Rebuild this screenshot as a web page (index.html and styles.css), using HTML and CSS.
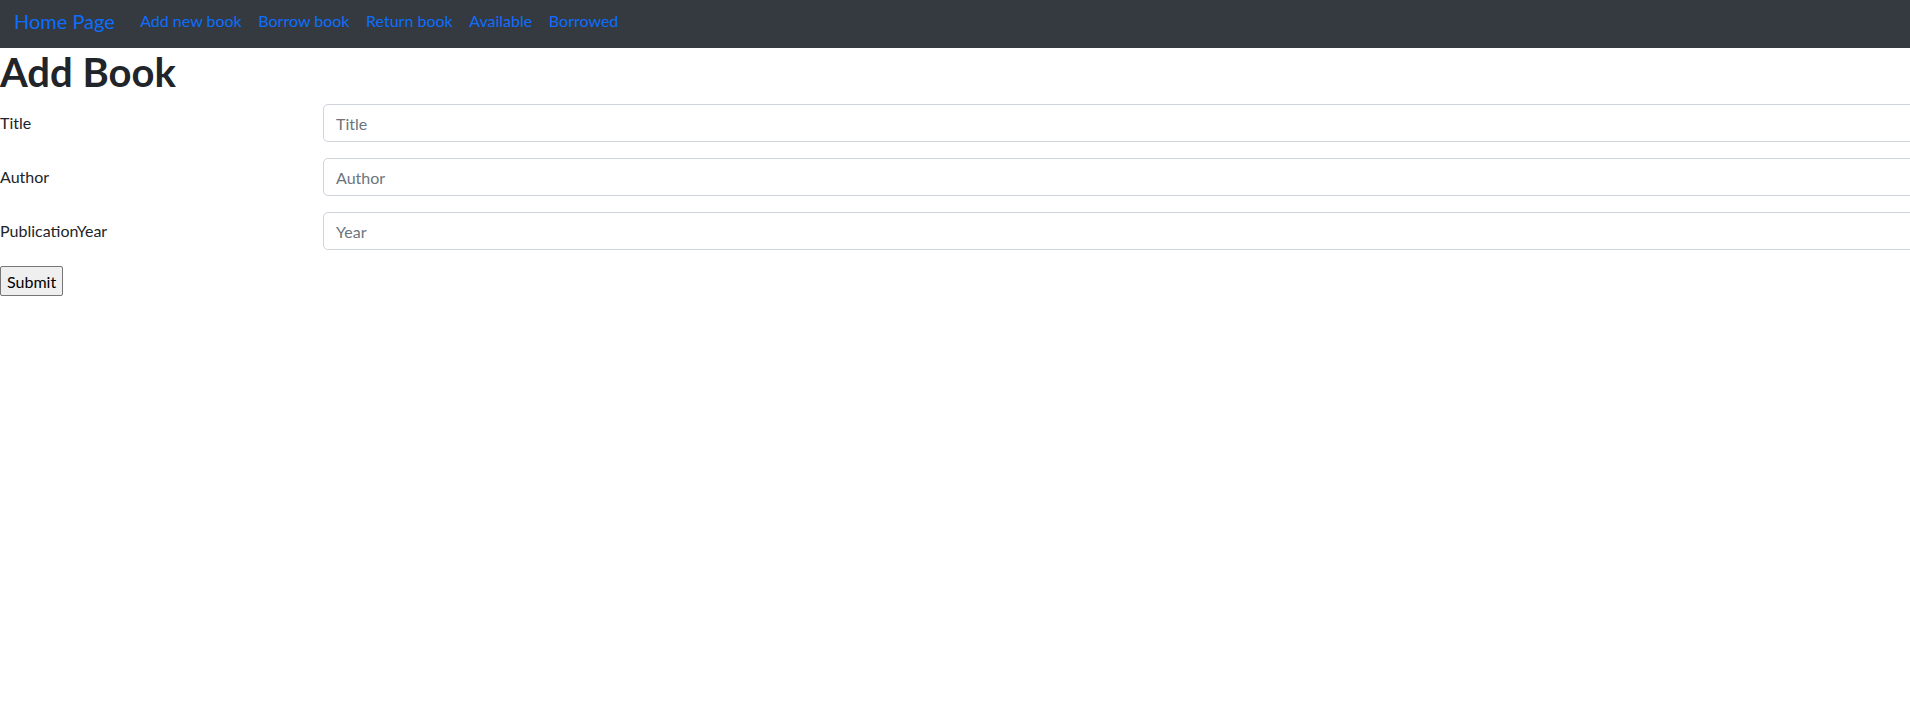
FILE: index.html
```html
<!DOCTYPE html>
<html lang="en">
<head>
<meta charset="utf-8">
<title>Add Book</title>
<link rel="stylesheet" href="styles.css">
</head>
<body>
<nav class="navbar">
  <a class="brand" href="#">Home Page</a>
  <ul class="nav-links">
    <li><a href="#">Add new book</a></li>
    <li><a href="#">Borrow book</a></li>
    <li><a href="#">Return book</a></li>
    <li><a href="#">Available</a></li>
    <li><a href="#">Borrowed</a></li>
  </ul>
</nav>
<main class="page">
  <h1 class="title">Add Book</h1>
  <form class="book-form">
    <div class="form-row">
      <label class="form-label" for="title">Title</label>
      <div class="field"><input class="form-input" id="title" type="text" placeholder="Title"></div>
    </div>
    <div class="form-row">
      <label class="form-label" for="author">Author</label>
      <div class="field"><input class="form-input" id="author" type="text" placeholder="Author"></div>
    </div>
    <div class="form-row">
      <label class="form-label" for="year">PublicationYear</label>
      <div class="field"><input class="form-input" id="year" type="text" placeholder="Year"></div>
    </div>
    <button class="submit-btn" type="submit">Submit</button>
  </form>
</main>
</body>
</html>
```
FILE: styles.css
```css
* { box-sizing: border-box; }
html, body { margin: 0; padding: 0; }
body {
  font-family: Lato, "Liberation Sans", sans-serif;
  font-size: 16px;
  line-height: 1.5;
  color: #212529;
  background: #fff;
  overflow-x: hidden;
}
.navbar {
  height: 48px;
  background: #343a40;
  display: flex;
  align-items: center;
  padding: 0 12px 7px 14px;
}
.brand {
  font-size: 20px;
  color: #0d6efd;
  text-decoration: none;
  margin-right: 17px;
  line-height: 1.5;
}
.nav-links {
  list-style: none;
  margin: 0;
  padding: 0;
  display: flex;
}
.nav-links a {
  display: block;
  padding: 8px 8.3px;
  color: #0d6efd;
  text-decoration: none;
}
.title {
  margin: 0 0 8px;
  font-size: 40px;
  font-weight: 700;
  line-height: 1.2;
}
.book-form { overflow: hidden; }
.form-row {
  display: grid;
  grid-template-columns: 323px 1fr;
  margin-bottom: 16px;
}
.form-label {
  padding: 7px 0;
  line-height: 1.5;
}
.form-input {
  display: block;
  width: calc(100% + 20px);
  height: 38px;
  padding: 6px 12px;
  font: inherit;
  color: #212529;
  border: 1px solid #ced4da;
  border-radius: 5px;
  background: #fff;
}
.form-input::placeholder { color: #6c757d; }
.submit-btn {
  display: block;
  height: 30px;
  width: 63px;
  padding: 1px 6px;
  font-family: inherit;
  font-size: 16px;
  font-weight: 400;
  color: #000;
  background: #efefef;
  border: 1px solid #767676;
  border-radius: 2px;
}
```
